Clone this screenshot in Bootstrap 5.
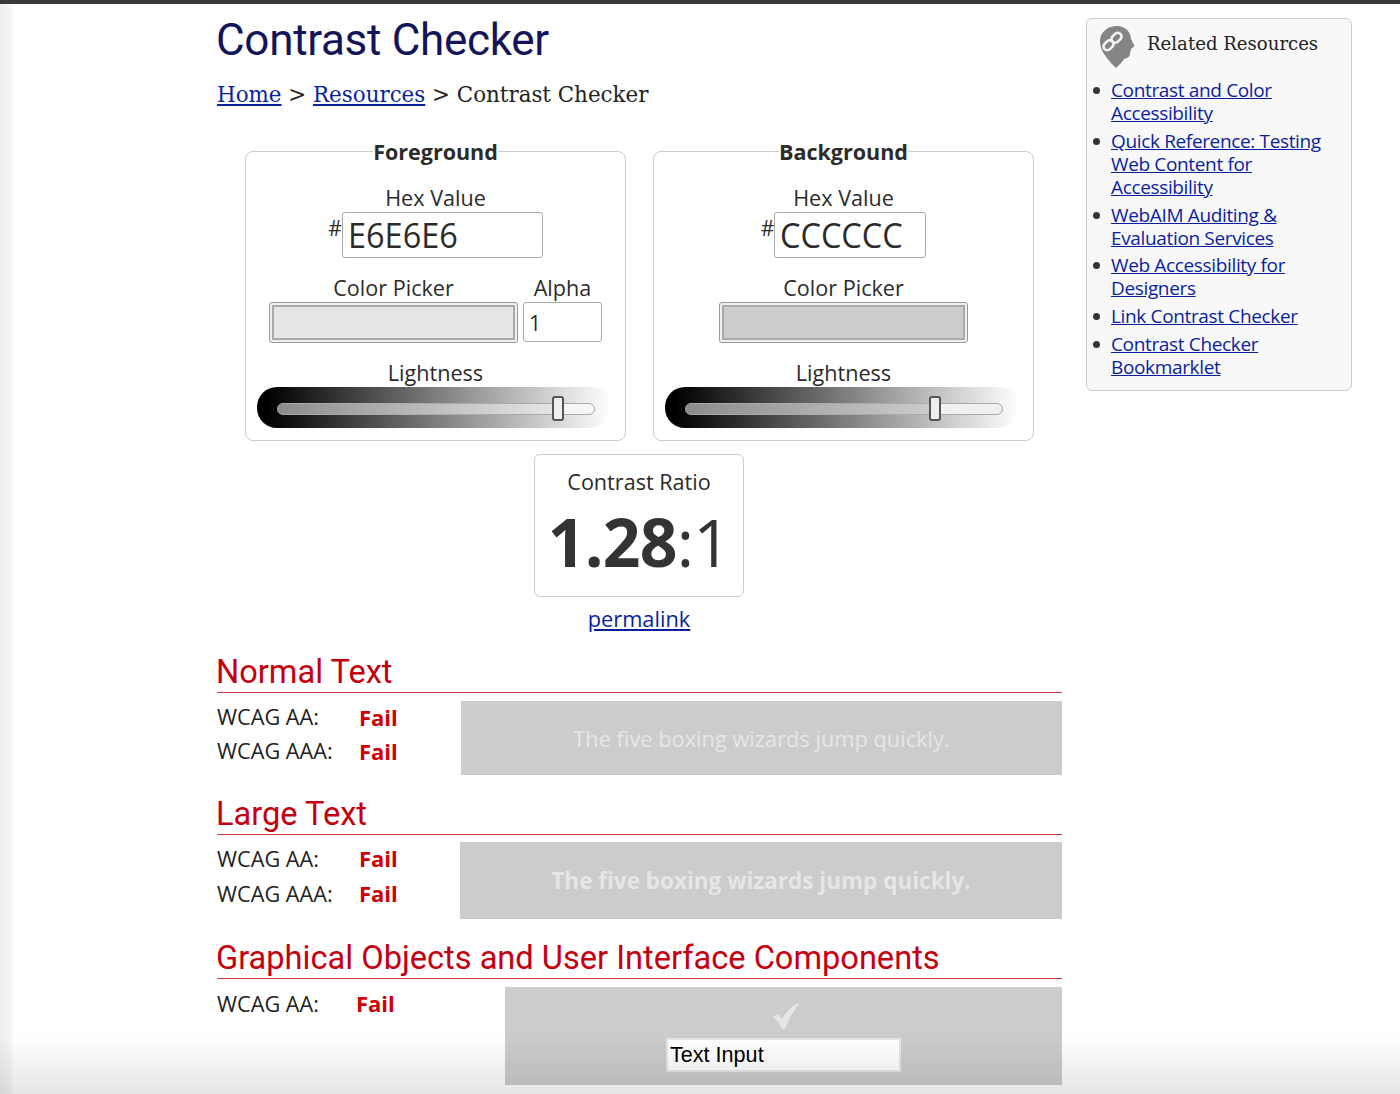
<!DOCTYPE html>
<html lang="en">
<head>
<meta charset="utf-8">
<title>Contrast Checker</title>
<link href="https://cdn.jsdelivr.net/npm/bootstrap@5.3.0/dist/css/bootstrap.min.css" rel="stylesheet">
<style>
html,body{height:1094px;overflow:hidden}
body{position:relative;font-family:"Open Sans",sans-serif;color:#2b2b2b;background:linear-gradient(90deg,#eee 0,#f6f6f6 11px,#fff 13px);border-top:4px solid #3a3a3a}
body::after{content:"";position:absolute;left:0;right:0;bottom:0;height:60px;background:linear-gradient(180deg,rgba(0,0,0,0),rgba(0,0,0,.1));pointer-events:none}
a{color:#0a1f9e}
.page-shell{padding-left:216px;column-gap:24px}
.main-col{width:846px;flex:none}
.page-title{font-family:Roboto,sans-serif;font-size:44px;line-height:52px;font-weight:400;color:#14145a;margin:10px 0 0;letter-spacing:-.3px}
.crumbs{font-family:"DejaVu Serif",serif;font-size:21.4px;line-height:30px;margin:14px 0 0 1px;color:#222}
.pickers{margin:27px 0 0 29px;column-gap:27px;width:789px}
.pick-box{width:381px;height:304px;border:1px solid #ccc;border-radius:8px;margin:0;padding:0;flex:none;min-width:0;text-align:center}
.pick-box legend{float:none;width:auto;font-size:21.5px;line-height:26px;font-weight:700;margin:0 auto;padding:2px 0 0;color:#2b2b2b}
.lbl{font-size:21.6px;line-height:28px;color:#2b2b2b}
.lbl-first{margin-top:19px}
.lbl-last{margin-top:16px}
.hex-row{height:46px}
.hash{font-size:21px;line-height:28px;margin-top:2px}
.hex-in{height:46px;border:1px solid #aaa;border-radius:3px;color:#2b2b2b;padding:0 5px;background:#fff;text-align:left}
.hex-text{display:inline-block;font-size:34px;line-height:44px;transform:scaleX(.955);transform-origin:left center}
.swatch{height:41px;border:1px solid #999;border-radius:3px;padding:2px;background:#efefef}
.swatch>span{display:block;height:100%;border:2px solid #aaa}
.picker-pair{margin:16px 23px 0;column-gap:5px}
.picker-one{margin-top:16px}
.swatch-bg{width:249px}
.alpha{width:79px;height:40px;border:1px solid #aaa;border-radius:3px;font-size:21px;line-height:40px;text-align:left;padding-left:5px;background:#fff}
.light-bar{height:41px;margin:0 14px 0 11px;border-radius:20px;padding:0 16px 0 20px;background:linear-gradient(90deg,#000 0,#000 3%,#fff 100%);position:relative}
.light-track{height:12px;flex:1;border:1px solid #aaa;border-radius:6px;margin-top:2px}
.light-thumb{position:absolute;top:9px;width:12px;height:25px;border:2px solid #555;border-radius:3px;background:#eee}
.ratio-box{width:210px;height:143px;border:1px solid #ccc;border-radius:6px;margin:13px auto 0;text-align:center}
.ratio-cap{font-size:21.6px;line-height:28px;padding-top:13px}
.ratio-val{font-size:66px;line-height:70px;margin-top:10px;color:#333;letter-spacing:-.8px}
.ratio-val b{font-weight:700}
.perma{font-size:21.8px;line-height:28px;margin-top:8px;text-align:center}
.res-h{font-family:Roboto,sans-serif;font-size:32.6px;line-height:40px;font-weight:400;color:#c4000f;border-bottom:1px solid #d8323c;margin:0 0 0 1px;text-indent:-1px}
.sec-one,.sec-two,.sec-three{margin-top:19px}
.res-labels{flex:none}
.lab-line{font-family:"Open Sans",sans-serif;font-size:21.7px;line-height:35px;color:#222;display:flex}
.lab-tight{line-height:34px}
.lab-line span{width:143px;padding-left:1px}
.lab-line .lab-short{width:140px}
.lab-line b{color:#d00000;font-size:22px;font-weight:700}
.demo{background:#ccc;color:#e6e6e6;display:flex;align-items:center;justify-content:center;margin-left:auto}
.demo-n{width:601px;height:74px;margin-top:8px;font-size:21.8px;padding-top:2px}
.demo-l{width:602px;height:77px;margin-top:7px;font-size:22.5px;font-weight:700}
.demo-g{width:557px;height:98px;margin-top:8px;flex-direction:column;justify-content:flex-start}
.fake-in{width:235px;height:34px;background:#fff;border:2px solid #e6e6e6;color:#000;font:21.6px/30px "Liberation Sans",sans-serif;padding-left:2px;margin-top:9px}
.side-col{width:266px;flex:none;height:373px;margin-top:14px;background:#f8f8f8;border:1px solid #ccc;border-radius:6px}
.side-head{font-family:"DejaVu Serif",serif;font-size:18.1px;line-height:24px;color:#222;padding:7px 0 0 13px;column-gap:12px;height:60px}
.side-head span{margin-top:6px}
.side-list{margin:0;padding-left:24px;list-style:none;font-size:19px;line-height:23px;letter-spacing:-.35px}
.side-list li{margin-bottom:4.8px;position:relative}
.side-list li::before{content:"";position:absolute;left:-18px;top:8px;width:7px;height:7px;border-radius:50%;background:#333}
</style>
</head>
<body>
<div class="page-shell d-flex align-items-start">
  <main class="main-col">
    <h1 class="page-title">Contrast Checker</h1>
    <p class="crumbs"><a href="#">Home</a> &gt; <a href="#">Resources</a> &gt; Contrast Checker</p>
    <div class="pickers d-flex">
      <fieldset class="pick-box">
        <legend>Foreground</legend>
        <div class="lbl lbl-first">Hex Value</div>
        <div class="hex-row d-flex justify-content-center">
          <span class="hash">#</span><div class="hex-in" style="width:201px"><span class="hex-text">E6E6E6</span></div>
        </div>
        <div class="picker-pair d-flex">
          <div class="flex-grow-1"><div class="lbl">Color Picker</div><div class="swatch"><span style="background:#e6e6e6"></span></div></div>
          <div><div class="lbl">Alpha</div><div class="alpha">1</div></div>
        </div>
        <div class="lbl lbl-last">Lightness</div>
        <div class="light-bar d-flex align-items-center"><div class="light-track" style="background:linear-gradient(90deg,#8c8c8c 0,#e6e6e6 88%,#f6f6f6 88%)"></div><div class="light-thumb" style="left:295px"></div></div>
      </fieldset>
      <fieldset class="pick-box">
        <legend>Background</legend>
        <div class="lbl lbl-first">Hex Value</div>
        <div class="hex-row d-flex justify-content-center">
          <span class="hash">#</span><div class="hex-in" style="width:152px"><span class="hex-text">CCCCCC</span></div>
        </div>
        <div class="picker-one">
          <div class="lbl">Color Picker</div><div class="swatch swatch-bg mx-auto"><span style="background:#ccc"></span></div>
        </div>
        <div class="lbl lbl-last">Lightness</div>
        <div class="light-bar d-flex align-items-center"><div class="light-track" style="background:linear-gradient(90deg,#8c8c8c 0,#ccc 78%,#f0f0f0 78%)"></div><div class="light-thumb" style="left:264px"></div></div>
      </fieldset>
    </div>
    <div class="ratio-box">
      <div class="ratio-cap">Contrast Ratio</div>
      <div class="ratio-val"><b>1.28</b>:1</div>
    </div>
    <div class="perma"><a href="#">permalink</a></div>
    <h2 class="res-h sec-one">Normal Text</h2>
    <div class="d-flex">
      <div class="res-labels" style="margin-top:7px">
        <div class="lab-line lab-tight"><span>WCAG AA:</span><b>Fail</b></div>
        <div class="lab-line lab-tight"><span>WCAG AAA:</span><b>Fail</b></div>
      </div>
      <div class="demo demo-n">The five boxing wizards jump quickly.</div>
    </div>
    <h2 class="res-h sec-two">Large Text</h2>
    <div class="d-flex">
      <div class="res-labels" style="margin-top:6px">
        <div class="lab-line"><span>WCAG AA:</span><b>Fail</b></div>
        <div class="lab-line"><span>WCAG AAA:</span><b>Fail</b></div>
      </div>
      <div class="demo demo-l">The five boxing wizards jump quickly.</div>
    </div>
    <h2 class="res-h sec-three">Graphical Objects and User Interface Components</h2>
    <div class="d-flex">
      <div class="res-labels" style="margin-top:7px">
        <div class="lab-line"><span class="lab-short">WCAG AA:</span><b>Fail</b></div>
      </div>
      <div class="demo demo-g">
        <svg class="mt-3 ms-1" width="26" height="26" viewBox="0 0 26 26"><path d="M0 14l5-3 4 5C13 9 19 3 25 0l1 1C20 8 16 16 12 26H9C7 21 4 17 0 14z" fill="#e6e6e6"/></svg>
        <div class="fake-in">Text Input</div>
      </div>
    </div>
  </main>
  <aside class="side-col">
    <div class="side-head d-flex align-items-start">
      <svg width="35" height="42" viewBox="0 0 35 42" class="flex-shrink-0"><path d="M17 0C26 0 31 7 31 13L34.5 20 31 23 30 28C30 31 27 32 24 33L22 36 16 42 11 37C8 33 6 31 4 28 1 24 0 19 0 15 0 6 8 0 17 0Z" fill="#858585"/><g fill="none" stroke="#f4f4f4" stroke-width="2.6" transform="translate(-3.5 -.5)"><rect x="6.5" y="16" width="11" height="7.5" rx="3.7" transform="rotate(-45 12 19.75)"/><rect x="14.5" y="8.5" width="11" height="7.5" rx="3.7" transform="rotate(-45 20 12.25)"/></g></svg>
      <span>Related Resources</span>
    </div>
    <ul class="side-list">
      <li><a href="#">Contrast and Color Accessibility</a></li>
      <li><a href="#">Quick Reference: Testing Web Content for Accessibility</a></li>
      <li><a href="#">WebAIM Auditing &amp; Evaluation Services</a></li>
      <li><a href="#">Web Accessibility for Designers</a></li>
      <li><a href="#">Link Contrast Checker</a></li>
      <li><a href="#">Contrast Checker Bookmarklet</a></li>
    </ul>
  </aside>
</div>
<script src="https://cdn.jsdelivr.net/npm/bootstrap@5.3.0/dist/js/bootstrap.bundle.min.js"></script>
</body>
</html>
